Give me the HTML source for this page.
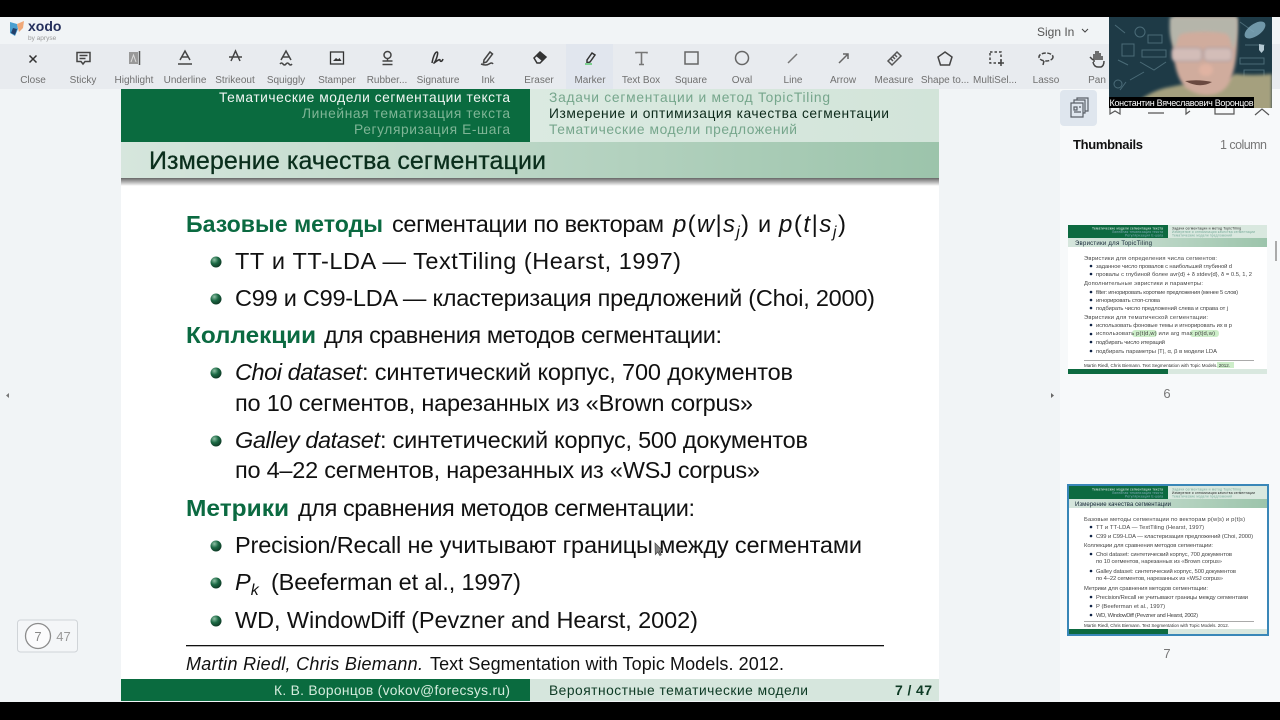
<!DOCTYPE html>
<html><head><meta charset="utf-8"><style>
html,body{margin:0;padding:0;background:#000;width:1280px;height:720px;overflow:hidden}
svg{display:block;position:absolute;left:0;top:0}
#root{filter:blur(.3px)}
text{font-family:"Liberation Sans",sans-serif}
.l{font-size:10px;fill:#707070;text-anchor:middle}
.i{fill:none;stroke:#444;stroke-width:1.5}
.b{font-size:23.5px;fill:#111}
.g{font-size:23.5px;fill:#0b6a41;font-weight:bold}
.it{font-size:23.5px;fill:#111;font-style:italic}
.s{font-size:5.8px;fill:#444}
</style></head><body>
<svg id="root" width="1280" height="720" viewBox="0 0 1280 720" xmlns="http://www.w3.org/2000/svg">
<defs>
<linearGradient id="tb" x1="0" x2="1" y1="0" y2="0"><stop offset="0" stop-color="#d6e6dd"/><stop offset="1" stop-color="#9cc4ab"/></linearGradient>
<linearGradient id="hr" x1="0" x2="1" y1="0" y2="0"><stop offset="0" stop-color="#dbeae1"/><stop offset="1" stop-color="#d2e4d9"/></linearGradient>
<linearGradient id="sh" x1="0" x2="0" y1="0" y2="1"><stop offset="0" stop-color="#666"/><stop offset="1" stop-color="#fff"/></linearGradient>
<radialGradient id="ball" cx=".35" cy=".3" r=".8"><stop offset="0" stop-color="#8fc0a5"/><stop offset=".45" stop-color="#1c6a45"/><stop offset="1" stop-color="#0b2f1e"/></radialGradient>
<filter id="bl"><feGaussianBlur stdDeviation=".35"/></filter>
<filter id="bl2" x="-20%" y="-20%" width="140%" height="140%"><feGaussianBlur stdDeviation="1.5"/></filter>
</defs>
<rect width="1280" height="720" fill="#000"/>
<rect y="17" width="1280" height="685" fill="#f1f4f6"/>
<rect y="44" width="1280" height="45" fill="#e8ebef"/>
<rect x="1060" y="89" width="220" height="613" fill="#f7f9fa"/>
<rect x="566" y="44" width="47" height="45" fill="#e1e6ee"/>

<!-- logo -->
<path d="M10 22l7 2 1 5-3 7-5-3z" fill="#4a9fd0"/><path d="M17 24l7-3-1 7-4 4z" fill="#f0a878"/><path d="M13 28l4 1-2 6-4-2z" fill="#24406a"/>
<text x="28" y="31" style="font-size:14px;font-weight:bold;fill:#25305c">xodo</text>
<text x="28" y="40" style="font-size:6.5px;fill:#999">by apryse</text>
<text x="1037" y="36" style="font-size:12px;fill:#555">Sign In</text>
<path d="M1082 29l3 3 3-3" class="i" style="stroke-width:1"/>

<!-- toolbar labels -->
<g>
<text class="l" x="33" y="83">Close</text><text class="l" x="83" y="83">Sticky</text><text class="l" x="134" y="83">Highlight</text><text class="l" x="185" y="83">Underline</text><text class="l" x="235" y="83">Strikeout</text><text class="l" x="286" y="83">Squiggly</text><text class="l" x="337" y="83">Stamper</text><text class="l" x="387" y="83">Rubber...</text><text class="l" x="438" y="83">Signature</text><text class="l" x="488" y="83">Ink</text><text class="l" x="539" y="83">Eraser</text><text class="l" x="590" y="83">Marker</text><text class="l" x="641" y="83">Text Box</text><text class="l" x="691" y="83">Square</text><text class="l" x="742" y="83">Oval</text><text class="l" x="793" y="83">Line</text><text class="l" x="843" y="83">Arrow</text><text class="l" x="894" y="83">Measure</text><text class="l" x="945" y="83">Shape to...</text><text class="l" x="995" y="83">MultiSel...</text><text class="l" x="1046" y="83">Lasso</text><text class="l" x="1097" y="83">Pan</text>
</g>
<!-- toolbar icons -->
<g class="i">
<path d="M29.500 55.500l7 7m0-7l-7 7" style="stroke:#333"/>
<path d="M77 52.500h13v9h-5l-2 2.500-2-2.500h-4zM79.500 55.500h8m-8 3h6"/>
<rect x="129" y="52" width="9" height="12" fill="#999" stroke="none"/><path d="M131 62l2.500-7 2.500 7" style="stroke:#ddd;stroke-width:1"/><path d="M139.500 51v14" style="stroke:#555;stroke-width:1.500"/>
<path d="M180 60l5-9 5 9m-8-3h6M178 64h14"/>
<path d="M231 61l4.500-10 4.500 10M229 57h13"/>
<path d="M281 60l5-9 5 9m-8-3h6M280 64q1.500-2 3 0t3 0 3 0 3 0"/>
<rect x="330.500" y="52" width="13" height="12" style="stroke-width:1.300;stroke:#333"/><path d="M333 61l3-3 2 1.500 1.500-1.500 2 3z" fill="#333" stroke="none"/>
<circle cx="387.500" cy="55" r="3.500"/><path d="M387.500 58.500v2.500M382.500 61h10M382.500 64.500h10"/>
<path d="M432 63c1-6 3-11 5-11s-1 9-3 11c-1 1 6-5 6-3s2 2 3-1" style="stroke:#333"/>
<path d="M484 60l6-8 2.500 2-6 8-3 1zM481 64q5 2 8 0t4 0"/>
<path d="M534 58l6-6 6 5-6 6h-3z" style="stroke:#333"/><path d="M539.500 52l6.500 5-4 4-6-5z" fill="#333" stroke="none"/>
<path d="M587 60l5-7 3 2-5 7-3 1z" style="stroke:#333"/><path d="M585 64h7" style="stroke:#7ccf8f;stroke-width:2"/>
<path d="M636 53.500v-1h11v1M641.500 52.500v12M639 64.500h5" style="stroke:#777;stroke-width:1.600"/>
<rect x="685" y="52" width="13" height="12" style="stroke:#666;stroke-width:1.500"/>
<circle cx="742" cy="58" r="6.500" style="stroke:#666;stroke-width:1.500"/>
<path d="M788 63l9-9" style="stroke:#777"/>
<path d="M839 63l9-9m-5 0h5v5" style="stroke:#666"/>
<path d="M888 61l9-9 4 4-9 9zM891 59l2 2m0-4l2 2m0-4l2 2" style="stroke:#555"/>
<path d="M945 52l7 5-2.500 8h-9l-2.500-8z"/>
<rect x="990" y="52" width="11" height="11" stroke-dasharray="2.500 2"/><path d="M1001 60v6m-3-3h6"/>
<ellipse cx="1046" cy="57" rx="7" ry="4" stroke-dasharray="4 1.500"/><path d="M1044 61l-1 4"/>
<path d="M1094 62v-8m2 6v-9m2 9v-9m2 9v-7m2 7v-4m-9 4l-3-3m3 5q1 5 5 5h3q3-1 3-6"/>
</g>

<!-- side controls -->
<path d="M9 393l-3 2.500 3 2.500z" fill="#777"/><path d="M1051 393l3 2.500-3 2.500z" fill="#666"/>
<rect x="17.500" y="620" width="60" height="32" rx="3" fill="#f4f6f8" stroke="#d0d4d8"/>
<circle cx="38" cy="636" r="12.500" fill="#fbfbfc" stroke="#8c8c8c" stroke-width="1.300"/>
<text x="38" y="641" text-anchor="middle" style="font-size:13px;fill:#888">7</text>
<text x="63.500" y="641" text-anchor="middle" style="font-size:13px;fill:#999">47</text>

<!-- SLIDE -->
<rect x="121" y="89" width="818" height="612" fill="#fff"/>
<rect x="121" y="89" width="409" height="53" fill="#0a6b3f"/>
<rect x="530" y="89" width="409" height="53" fill="url(#hr)"/>
<rect x="121" y="142" width="818" height="36" fill="url(#tb)"/>
<rect x="121" y="178" width="818" height="8" fill="url(#sh)"/>
<g>
<text x="219" y="102" textLength="291" lengthAdjust="spacing" fill="#f2f7f4" style="font-size:13.800px">Тематические модели сегментации текста</text>
<text x="302" y="118" textLength="208" lengthAdjust="spacing" fill="#7fb596" style="font-size:13.800px">Линейная тематизация текста</text>
<text x="354" y="134" textLength="156" lengthAdjust="spacing" fill="#7fb596" style="font-size:13.800px">Регуляризация Е-шага</text>
<text x="549" y="102" textLength="281" lengthAdjust="spacing" fill="#76a68c" style="font-size:13.800px">Задачи сегментации и метод TopicTiling</text>
<text x="549" y="118" textLength="340" lengthAdjust="spacing" fill="#0d2a1b" style="font-size:13.800px">Измерение и оптимизация качества сегментации</text>
<text x="549" y="134" textLength="248" lengthAdjust="spacing" fill="#76a68c" style="font-size:13.800px">Тематические модели предложений</text>
</g>
<text x="149" y="169" textLength="397" lengthAdjust="spacing" style="font-size:25px;fill:#0a2e1c;stroke:#0a2e1c;stroke-width:.3">Измерение качества сегментации</text>

<g>
<text class="g" x="186" y="232" textLength="197" lengthAdjust="spacingAndGlyphs">Базовые методы</text>
<text class="b" x="392" y="232" textLength="272" lengthAdjust="spacing">сегментации по векторам</text>
<text class="it" x="673" y="232" textLength="76" lengthAdjust="spacing" style="font-size:24px">p<tspan font-style="normal">(</tspan>w<tspan font-style="normal">|</tspan>s<tspan dy="5" style="font-size:16px">j</tspan><tspan dy="-5" font-style="normal">)</tspan></text>
<text class="b" x="758" y="232">и</text>
<text class="it" x="779" y="232" textLength="67" lengthAdjust="spacing" style="font-size:24px">p<tspan font-style="normal">(</tspan>t<tspan font-style="normal">|</tspan>s<tspan dy="5" style="font-size:16px">j</tspan><tspan dy="-5" font-style="normal">)</tspan></text>
<circle cx="216" cy="262" r="5.500" fill="url(#ball)"/>
<text class="b" x="235" y="269" textLength="446" lengthAdjust="spacing">ТТ и TT-LDA — TextTiling (Hearst, 1997)</text>
<circle cx="216" cy="299" r="5.500" fill="url(#ball)"/>
<text class="b" x="235" y="306" textLength="640" lengthAdjust="spacing">C99 и C99-LDA — кластеризация предложений (Choi, 2000)</text>
<text class="g" x="186" y="343" textLength="130" lengthAdjust="spacingAndGlyphs">Коллекции</text>
<text class="b" x="324" y="343" textLength="398" lengthAdjust="spacing">для сравнения методов сегментации:</text>
<circle cx="216" cy="373" r="5.500" fill="url(#ball)"/>
<text class="it" x="235" y="380" textLength="127" lengthAdjust="spacing">Choi dataset</text>
<text class="b" x="362" y="380" textLength="431" lengthAdjust="spacing">: синтетический корпус, 700 документов</text>
<text class="b" x="235" y="411" textLength="518" lengthAdjust="spacing">по 10 сегментов, нарезанных из «Brown corpus»</text>
<circle cx="216" cy="441" r="5.500" fill="url(#ball)"/>
<text class="it" x="235" y="448" textLength="145" lengthAdjust="spacing">Galley dataset</text>
<text class="b" x="380" y="448" textLength="428" lengthAdjust="spacing">: синтетический корпус, 500 документов</text>
<text class="b" x="235" y="478" textLength="525" lengthAdjust="spacing">по 4–22 сегментов, нарезанных из «WSJ corpus»</text>
<text class="g" x="186" y="516" textLength="103" lengthAdjust="spacingAndGlyphs">Метрики</text>
<text class="b" x="298" y="516" textLength="397" lengthAdjust="spacing">для сравнения методов сегментации:</text>
<circle cx="216" cy="546" r="5.500" fill="url(#ball)"/>
<text class="b" x="235" y="553" textLength="627" lengthAdjust="spacing">Precision/Recall не учитывают границы между сегментами</text>
<circle cx="216" cy="583" r="5.500" fill="url(#ball)"/>
<text class="it" x="235" y="590">P<tspan dy="5" style="font-size:16px">k</tspan></text>
<text class="b" x="271" y="590" textLength="250" lengthAdjust="spacing">(Beeferman et al., 1997)</text>
<circle cx="216" cy="621" r="5.500" fill="url(#ball)"/>
<text class="b" x="235" y="628" textLength="463" lengthAdjust="spacing">WD, WindowDiff (Pevzner and Hearst, 2002)</text>
<rect x="186" y="645" width="698" height="1.300" fill="#111"/>
<text x="186" y="670" textLength="237" lengthAdjust="spacing" style="font-size:18px;font-style:italic;fill:#111">Martin Riedl, Chris Biemann.</text>
<text x="430" y="670" textLength="354" lengthAdjust="spacing" style="font-size:18px;fill:#111">Text Segmentation with Topic Models. 2012.</text>
</g>
<rect x="121" y="679" width="409" height="22" fill="#0a6b3f"/>
<rect x="530" y="679" width="409" height="22" fill="#d6e6dd"/>
<text x="274" y="695" textLength="236" lengthAdjust="spacing" style="font-size:13.800px;fill:#d4ecdd">К. В. Воронцов (vokov@forecsys.ru)</text>
<text x="549" y="695" textLength="259" lengthAdjust="spacing" style="font-size:13.800px;fill:#0d3a24">Вероятностные тематические модели</text>
<text x="895" y="695" textLength="37" lengthAdjust="spacing" style="font-size:14px;fill:#0d3a24;font-weight:bold">7 / 47</text>
<path d="M655 543l.3 11.500 2.500-2.500 2 3.500 1.500-.8-2-3.500 3.200-.5z" fill="#888" stroke="#444" stroke-width=".7"/>

<!-- right panel head -->
<rect x="1060" y="90" width="37" height="36" rx="4" fill="#dfe6ee"/>
<path d="M1071 103h12v14h-12zM1074 103v-3h11v13h-2M1077 100v-2h11v13h-3M1074 107h3v3h-3zM1079 107h2m-7 5h7" fill="none" stroke="#5a6068" stroke-width="1.200"/>
<path d="M1110 108v6l5-3 5 3v-6M1148 113h16M1186 108v6l4-3M1215 108v6h19v-6M1255 115l7-6 7 6" fill="none" stroke="#555" stroke-width="1.200"/>
<text x="1073" y="149" style="font-size:13px;font-weight:bold;fill:#111" textLength="70">Thumbnails</text>
<text x="1220" y="149" style="font-size:12.500px;fill:#777" textLength="47">1 column</text>
<rect x="1275" y="241" width="2" height="20" fill="#aaa"/>
<text x="1167" y="398" text-anchor="middle" style="font-size:13px;fill:#777">6</text>
<text x="1167" y="658" text-anchor="middle" style="font-size:13px;fill:#777">7</text>

<!-- Thumb 6 -->
<g filter="url(#bl)">
<rect x="1068" y="225" width="199" height="149" fill="#fff"/>
<rect x="1068" y="225" width="100" height="13" fill="#0a6b3f"/>
<rect x="1168" y="225" width="99" height="13" fill="#d9e8df"/>
<rect x="1068" y="238" width="199" height="9" fill="url(#tb)"/>
<text x="1092" y="229.500" textLength="71" style="font-size:3.300px;fill:#eee">Тематические модели сегментации текста</text>
<text x="1112" y="233" textLength="51" style="font-size:3.300px;fill:#8ab">Линейная тематизация текста</text>
<text x="1125" y="236.500" textLength="38" style="font-size:3.300px;fill:#8ab">Регуляризация Е-шага</text>
<text x="1172" y="229.500" textLength="69" style="font-size:3.300px;fill:#222">Задачи сегментации и метод TopicTiling</text>
<text x="1172" y="233" textLength="83" style="font-size:3.300px;fill:#7a9">Измерение и оптимизация качества сегментации</text>
<text x="1172" y="236.500" textLength="60" style="font-size:3.300px;fill:#7a9">Тематические модели предложений</text>
<text x="1075" y="245" textLength="77" style="font-size:6px;fill:#123">Эвристики для TopicTiling</text>
<rect x="1132" y="330" width="25" height="7" rx="3" fill="#cdeec9"/><rect x="1190" y="330" width="29" height="7" rx="3" fill="#cdeec9"/><rect x="1217" y="362" width="17" height="6" fill="#cdeec9"/>
<text class="s" x="1084" y="260" textLength="133">Эвристики для определения числа сегментов:</text>
<text class="s" x="1096" y="268" textLength="136">заданное число провалов с наибольшей глубиной d</text>
<text class="s" x="1096" y="276" textLength="156">провалы с глубиной более avr{d} + δ stdev{d}, δ = 0.5, 1, 2</text>
<text class="s" x="1084" y="285" textLength="119">Дополнительные эвристики и параметры:</text>
<text class="s" x="1096" y="294" textLength="142">filter: игнорировать короткие предложения (менее 5 слов)</text>
<text class="s" x="1096" y="302" textLength="64">игнорировать стоп-слова</text>
<text class="s" x="1096" y="310" textLength="132">подбирать число предложений слева и справа от j</text>
<text class="s" x="1084" y="319" textLength="124">Эвристики для тематической сегментации:</text>
<text class="s" x="1096" y="327" textLength="136">использовать фоновые темы и игнорировать их в p</text>
<text class="s" x="1096" y="335" textLength="119">использовать p(t|d,w) или arg max p(t|d,w)</text>
<text class="s" x="1096" y="344" textLength="69">подбирать число итераций</text>
<text class="s" x="1096" y="353" textLength="121">подбирать параметры |T|, α, β в модели LDA</text>
<rect x="1084" y="360" width="170" height=".5" fill="#555"/>
<text x="1084" y="367" textLength="146" style="font-size:4.500px;fill:#333">Martin Riedl, Chris Biemann. Text Segmentation with Topic Models. 2012.</text>
<g fill="#124"><circle cx="1091" cy="266" r="1.300"/><circle cx="1091" cy="274" r="1.300"/><circle cx="1091" cy="292" r="1.300"/><circle cx="1091" cy="300" r="1.300"/><circle cx="1091" cy="308" r="1.300"/><circle cx="1091" cy="325" r="1.300"/><circle cx="1091" cy="334" r="1.300"/><circle cx="1091" cy="342" r="1.300"/><circle cx="1091" cy="351" r="1.300"/></g>
<rect x="1068" y="369" width="100" height="5" fill="#0a6b3f"/><rect x="1168" y="369" width="99" height="5" fill="#d9e8df"/>
</g>

<!-- Thumb 7 -->
<rect x="1067" y="484" width="202" height="152" fill="#3a87b8"/>
<g filter="url(#bl)">
<rect x="1069" y="486" width="198" height="148" fill="#fff"/>
<rect x="1069" y="486" width="99" height="13" fill="#0a6b3f"/>
<rect x="1168" y="486" width="99" height="13" fill="#d9e8df"/>
<rect x="1069" y="499" width="198" height="9" fill="url(#tb)"/>
<text x="1092" y="490.500" textLength="71" style="font-size:3.300px;fill:#eee">Тематические модели сегментации текста</text>
<text x="1112" y="494" textLength="51" style="font-size:3.300px;fill:#8ab">Линейная тематизация текста</text>
<text x="1125" y="497.500" textLength="38" style="font-size:3.300px;fill:#8ab">Регуляризация Е-шага</text>
<text x="1172" y="490.500" textLength="69" style="font-size:3.300px;fill:#7a9">Задачи сегментации и метод TopicTiling</text>
<text x="1172" y="494" textLength="83" style="font-size:3.300px;fill:#222">Измерение и оптимизация качества сегментации</text>
<text x="1172" y="497.500" textLength="60" style="font-size:3.300px;fill:#7a9">Тематические модели предложений</text>
<text x="1075" y="506" textLength="96" style="font-size:6px;fill:#123">Измерение качества сегментации</text>
<text class="s" x="1084" y="521" textLength="161">Базовые методы сегментации по векторам p(w|s) и p(t|s)</text>
<text class="s" x="1096" y="529" textLength="108">ТТ и TT-LDA — TextTiling (Hearst, 1997)</text>
<text class="s" x="1096" y="538" textLength="157">C99 и C99-LDA — кластеризация предложений (Choi, 2000)</text>
<text class="s" x="1084" y="547" textLength="129">Коллекции для сравнения методов сегментации:</text>
<text class="s" x="1096" y="556" textLength="136">Choi dataset: синтетический корпус, 700 документов</text>
<text class="s" x="1096" y="563" textLength="126">по 10 сегментов, нарезанных из «Brown corpus»</text>
<text class="s" x="1096" y="573" textLength="140">Galley dataset: синтетический корпус, 500 документов</text>
<text class="s" x="1096" y="580" textLength="127">по 4–22 сегментов, нарезанных из «WSJ corpus»</text>
<text class="s" x="1084" y="590" textLength="124">Метрики для сравнения методов сегментации:</text>
<text class="s" x="1096" y="599" textLength="152">Precision/Recall не учитывают границы между сегментами</text>
<text class="s" x="1096" y="608" textLength="69">P (Beeferman et al., 1997)</text>
<text class="s" x="1096" y="617" textLength="102">WD, WindowDiff (Pevzner and Hearst, 2002)</text>
<rect x="1084" y="621" width="170" height=".5" fill="#555"/>
<text x="1084" y="627" textLength="145" style="font-size:4.500px;fill:#333">Martin Riedl, Chris Biemann. Text Segmentation with Topic Models. 2012.</text>
<g fill="#124"><circle cx="1091" cy="527" r="1.300"/><circle cx="1091" cy="536" r="1.300"/><circle cx="1091" cy="554" r="1.300"/><circle cx="1091" cy="571" r="1.300"/><circle cx="1091" cy="597" r="1.300"/><circle cx="1091" cy="606" r="1.300"/><circle cx="1091" cy="615" r="1.300"/></g>
<rect x="1069" y="629" width="99" height="5" fill="#0a6b3f"/><rect x="1168" y="629" width="99" height="5" fill="#d9e8df"/>
</g>

<!-- Webcam -->
<svg x="1109" y="17" width="163" height="91" viewBox="1109 17 163 91">
<rect x="1109" y="17" width="163" height="91" fill="#1e3a46"/>
<g fill="none" stroke="#6f93a0" stroke-width="1" opacity=".55">
<circle cx="1140" cy="32" r="5"/><rect x="1122" y="44" width="12" height="12"/><rect x="1148" y="35" width="14" height="8"/><path d="M1115 25l10 8M1140 62l14 8 12-8M1118 60l10 5M1130 80l14-8M1120 90l6-8"/><circle cx="1118" cy="84" r="4"/><rect x="1142" y="50" width="24" height="7"/>
<rect x="1244" y="70" width="20" height="9"/><rect x="1240" y="58" width="24" height="6"/><path d="M1240 22l14 10M1245 45h20"/>
</g>
<ellipse cx="1255" cy="30" rx="12" ry="6" fill="#7fa8ba" opacity=".85" transform="rotate(-35 1255 30)"/>
<path d="M1259 44l5 1v5l-2.500 3-2.500-3z" fill="#b4c8d2"/>
<path d="M1133 108q10-14 32-20l30-6h25l15-8q18 2 37 0v42z" fill="#a5a07e" filter="url(#bl2)"/>
<path d="M1173 17v28q1 30 12 42 10 8 22 8 14 0 21-10 8-14 9-40v-28z" fill="#d0ac9d" filter="url(#bl2)"/>
<path d="M1170 17c-1 14 0 24 5 32 2-6 2-12 6-15 12-3 36-3 46 0 4 4 4 10 6 16 4-8 5-22 4-33z" fill="#b5b5aa" filter="url(#bl2)"/>
<rect x="1172" y="48" width="30" height="13" rx="4" fill="#d3bdb8" stroke="#a09aa4" stroke-width="1" filter="url(#bl2)"/>
<rect x="1204" y="48" width="28" height="13" rx="4" fill="#d3bdb8" stroke="#a09aa4" stroke-width="1" filter="url(#bl2)"/>
<ellipse cx="1206" cy="70" rx="7" ry="6" fill="#e0b3a2" filter="url(#bl2)"/>
<path d="M1185 81q14-2 27 1-12 7-27-1z" fill="#6b4a40" filter="url(#bl)"/>
</svg>
<rect x="1109" y="97" width="145" height="11" fill="#000"/>
<text x="1109.500" y="106" textLength="144" lengthAdjust="spacing" style="font-size:9px;fill:#fff">Константин Вячеславович Воронцов</text>
<rect y="702" width="1280" height="18" fill="#000"/>
</svg>
</body></html>
